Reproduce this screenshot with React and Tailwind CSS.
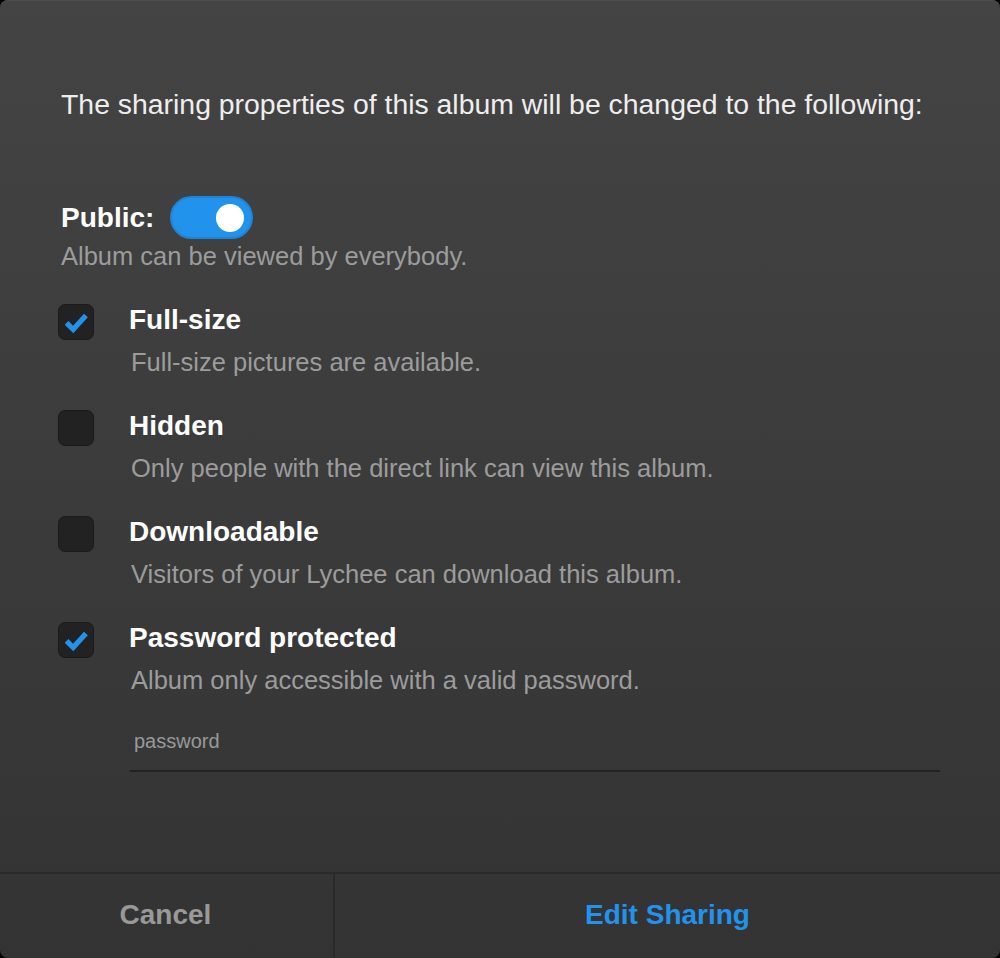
import { useState } from 'react'

const OPTIONS = [
  { key: 'full', label: 'Full-size', desc: 'Full-size pictures are available.', on: true },
  { key: 'hidden', label: 'Hidden', desc: 'Only people with the direct link can view this album.', on: false },
  { key: 'download', label: 'Downloadable', desc: 'Visitors of your Lychee can download this album.', on: false },
  { key: 'password', label: 'Password protected', desc: 'Album only accessible with a valid password.', on: true },
]

function Checkbox({ checked, onClick }) {
  return (
    <button onClick={onClick}
      className="w-[36px] h-[36px] shrink-0 rounded-[7px] bg-[#222] border border-[#1a1a1a] flex items-center justify-center">
      {checked && (
        <svg viewBox="0 0 36 36" className="w-[36px] h-[36px]">
          <polyline points="8,19 15,26 28.5,11" fill="none" stroke="#2293ec" strokeWidth="5.5" strokeLinejoin="miter" />
        </svg>
      )}
    </button>
  )
}

export default function App() {
  const [isPublic, setIsPublic] = useState(true)
  const [checks, setChecks] = useState(
    Object.fromEntries(OPTIONS.map(o => [o.key, o.on]))
  )

  return (
    <div className="w-[1000px] h-[958px] bg-black" style={{ fontFamily: '"Liberation Sans", Arial, sans-serif' }}>
      <div className="h-full flex flex-col rounded-[8px] overflow-hidden bg-gradient-to-b from-[#444] to-[#333] shadow-[inset_0_1px_0_#4c4c4c]">
        <div className="flex-1 px-[61px] pt-[88px]">
          <p className="text-[28.4px] leading-[32px] text-[#eee]">
            The sharing properties of this album will be changed to the following:
          </p>

          <div className="mt-[76px] h-[43px] flex items-center gap-[16px]">
            <span className="text-[28px] font-bold text-white">Public:</span>
            <button onClick={() => setIsPublic(!isPublic)}
              className={`w-[83px] h-[43px] rounded-full border-2 flex items-center pl-[6px] pr-[7px] ${isPublic ? 'bg-[#2293ec] border-[#1f84d4] justify-end' : 'bg-[#222] border-[#1a1a1a] justify-start'}`}>
              <span className="w-[28px] h-[28px] rounded-full bg-white" />
            </button>
          </div>
          <p className="mt-[2px] text-[25.5px] leading-[30px] text-[#9c9c9c]">Album can be viewed by everybody.</p>

          <div className="mt-[33px] flex flex-col gap-[32px]">
            {OPTIONS.map(o => (
              <div key={o.key} className="flex -ml-[3px] gap-[35px]">
                <Checkbox checked={checks[o.key]}
                  onClick={() => setChecks({ ...checks, [o.key]: !checks[o.key] })} />
                <div className="flex-1">
                  <div className="text-[28px] leading-[32px] font-bold text-white">{o.label}</div>
                  <div className="mt-[10px] pl-[2px] text-[25.5px] leading-[32px] text-[#9c9c9c]">{o.desc}</div>
                  {o.key === 'password' && (
                    <input type="text" placeholder="password"
                      className="mt-[17px] ml-[1px] w-[810px] h-[59px] bg-transparent border-b-2 border-[#222] px-[4px] text-[20px] text-white placeholder:text-[#999] outline-none" />
                  )}
                </div>
              </div>
            ))}
          </div>
        </div>

        <div className="h-[86px] shrink-0 flex border-t-2 border-[#2a2a2a]">
          <button className="w-[335px] border-r-2 border-[#2a2a2a] flex items-center justify-center pb-[3px] pr-[2px] text-[28px] font-bold text-[#999]">
            Cancel
          </button>
          <button className="flex-1 flex items-center justify-center pb-[3px] text-[28px] font-bold text-[#2293ec]">
            Edit Sharing
          </button>
        </div>
      </div>
    </div>
  )
}
